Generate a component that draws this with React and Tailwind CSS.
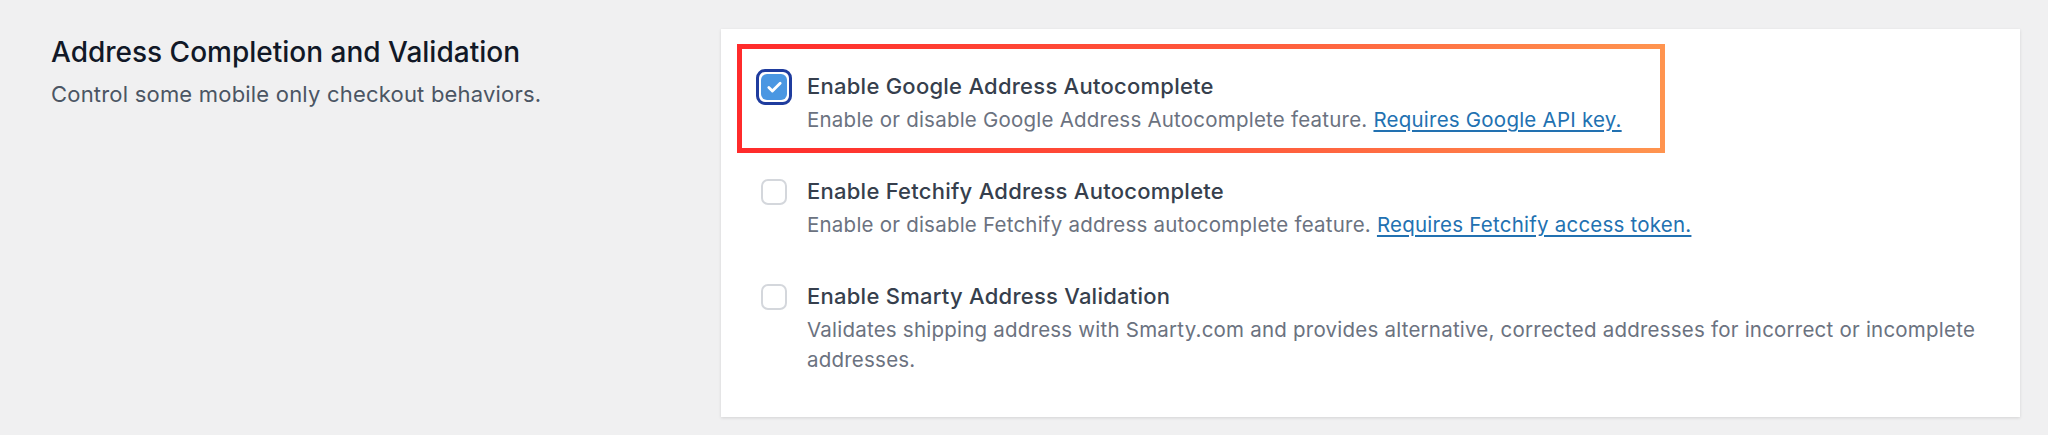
import { Check } from "lucide-react";

const options = [
  {
    id: "google",
    title: "Enable Google Address Autocomplete",
    desc: "Enable or disable Google Address Autocomplete feature.",
    link: "Requires Google API key.",
    checked: true,
    highlight: true,
  },
  {
    id: "fetchify",
    title: "Enable Fetchify Address Autocomplete",
    desc: "Enable or disable Fetchify address autocomplete feature.",
    link: "Requires Fetchify access token.",
  },
  {
    id: "smarty",
    title: "Enable Smarty Address Validation",
    desc: "Validates shipping address with Smarty.com and provides alternative, corrected addresses for incorrect or incomplete addresses.",
  },
];

const Checkbox = ({ checked }) => {
  if (checked) {
    return (
      <span className="flex items-center justify-center size-[36px] -ml-[5px] -mt-[5px] rounded-[9px] border-[3px] border-[#1f3c9e] bg-white">
        <span className="flex items-center justify-center size-[26px] rounded-[6px] bg-[#4a97e2]">
          <Check className="size-[17px] text-white" strokeWidth={4} />
        </span>
      </span>
    );
  }
  return (
    <span className="block size-[26px] rounded-[7px] border-2 border-[#d4d7dc] bg-white" />
  );
};

const Option = ({ item }) => (
  <div className="relative flex gap-[20px]">
    {item.highlight && (
      <div className="pointer-events-none absolute left-[-24px] top-[-26px] w-[928px] h-[109px] border-[5px] [border-image:linear-gradient(90deg,#ff2b2b,#ff5a3c_55%,#ff944f)_1]" />
    )}
    <div className="w-[26px] shrink-0 pt-[4px]">
      <Checkbox checked={item.checked} />
    </div>
    <div>
      <p className="text-[22px] leading-[32px] font-medium tracking-[0.25px] text-[#363f4d]">{item.title}</p>
      <p className="mt-[3px] text-[20.5px] leading-[30px] tracking-[0.22px] text-[#6b7280]">
        {item.desc}{" "}
        {item.link && (
          <a href="#" className="text-[#2271b1] underline underline-offset-[3px]">
            {item.link}
          </a>
        )}
      </p>
    </div>
  </div>
);

export default function App() {
  return (
    <div className="min-h-[435px] w-[2048px] bg-[#f0f0f1] pl-[51px] pr-[28px] pt-[29px] font-['Inter',sans-serif]">
      <div className="flex">
        <div className="w-[670px] shrink-0 pt-[5px]">
          <h2 className="text-[28px] leading-[36px] font-medium text-[#111827]">
            Address Completion and Validation
          </h2>
          <p className="mt-[10px] text-[22px] leading-[28px] tracking-[0.2px] text-[#4b5563]">
            Control some mobile only checkout behaviors.
          </p>
        </div>
        <div className="flex-1 bg-white pl-[40px] pr-[30px] pt-[41px] pb-[42px] shadow-[0_1px_3px_rgba(0,0,0,0.12)]">
          <div className="flex flex-col gap-[40px]">
            {options.map((item) => (
              <Option key={item.id} item={item} />
            ))}
          </div>
        </div>
      </div>
    </div>
  );
}
